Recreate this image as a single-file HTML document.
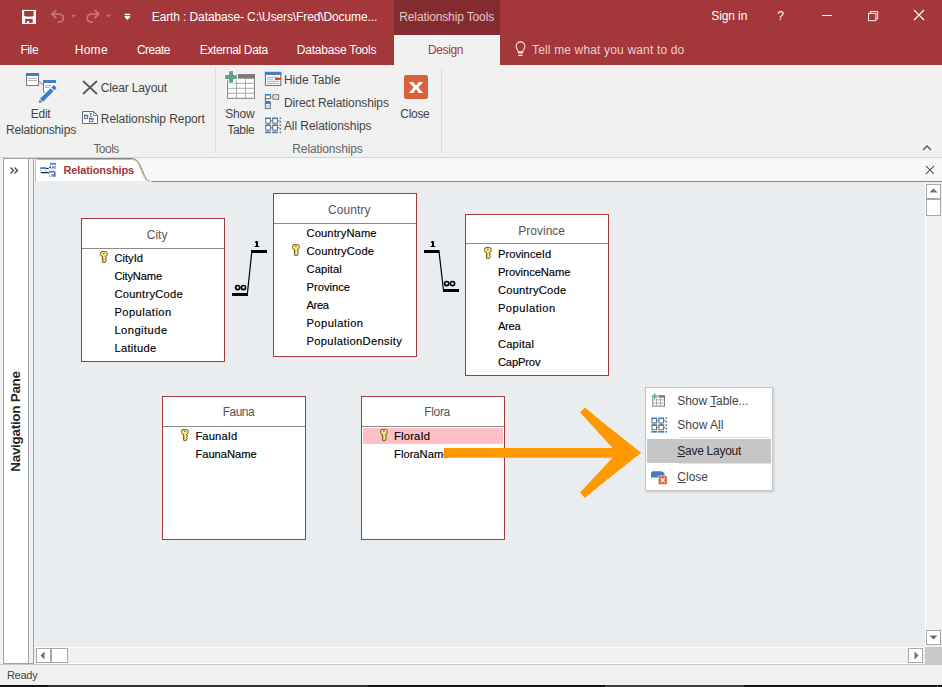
<!DOCTYPE html>
<html><head><meta charset="utf-8">
<style>
html,body{margin:0;padding:0;width:942px;height:687px;overflow:hidden;background:#F0F0F0;font-family:"Liberation Sans",sans-serif}
.a{position:absolute}
.t{position:absolute;white-space:nowrap;line-height:1;font-family:"Liberation Sans",sans-serif}
.tbl{position:absolute;background:#fff;border:1px solid #A4373A}
.div{position:absolute;height:1px;background:#8C8C8C}
.key{position:absolute}
svg{position:absolute;overflow:visible}
</style></head><body>
<!-- title bar + tab row -->
<div class="a" style="left:0;top:0;width:942px;height:65px;background:#A4373A"></div>
<div class="a" style="left:394px;top:0;width:106px;height:35px;background:#832C2F"></div>
<div class="a" style="left:394px;top:35px;width:106px;height:30px;background:#F1F1F1"></div>
<!-- ribbon -->
<div class="a" style="left:0;top:65px;width:942px;height:92px;background:#F1F1F1"></div>
<div class="a" style="left:0;top:157px;width:942px;height:1px;background:#D5D5D5"></div>
<div class="a" style="left:215px;top:69px;width:1px;height:84px;background:#DADADA"></div>
<div class="a" style="left:441px;top:69px;width:1px;height:84px;background:#DADADA"></div>

<!-- title bar icons -->
<svg style="left:0;top:0" width="140" height="35" viewBox="0 0 140 35">
  <rect x="22" y="9.9" width="14" height="14" fill="#fff"/>
  <path d="M24.2 11.1 H33.6 V15.6 L32.8 16.5 H25 L24.2 15.6 Z" fill="#A4373A"/>
  <rect x="25.1" y="18.9" width="7.6" height="4" fill="#A4373A"/>
  <rect x="26.9" y="21" width="2.3" height="1.9" fill="#fff"/>
  <g fill="none" stroke="#C77275" stroke-width="1.9">
    <path d="M52 14.1 H59.3 A4 4 0 0 1 59.3 22.1 H57.5"/>
    <path d="M56.3 9.9 L52 14.1 L56.3 18.3"/>
    <path d="M98.8 14.1 H91.2 A4 4 0 0 0 91.2 22.1 H93"/>
    <path d="M94.5 9.9 L98.8 14.1 L94.5 18.3"/>
  </g>
  <path d="M71 14.8 H76 L73.5 17.8 Z" fill="#C77275"/>
  <path d="M106 14.8 H111 L108.5 17.8 Z" fill="#C77275"/>
  <rect x="124.6" y="13.7" width="5.6" height="1.3" fill="#fff"/>
  <rect x="124.6" y="15.8" width="5.6" height="1.3" fill="#fff"/>
  <path d="M124.6 17 H130.2 L127.4 20.1 Z" fill="#fff"/>
</svg>
<!-- window controls -->
<div class="a" style="left:822px;top:15px;width:10px;height:1px;background:#fff"></div>
<svg style="left:868px;top:10.5px" width="10.2" height="10.2" viewBox="0 0 11 11">
  <rect x="0.5" y="2.5" width="8" height="8" fill="none" stroke="#fff" stroke-width="1"/>
  <path d="M2.5 2.5 V0.5 H10.5 V8.5 H8.5" fill="none" stroke="#fff" stroke-width="1"/>
</svg>
<svg style="left:914px;top:10px" width="10" height="10" viewBox="0 0 10 10">
  <path d="M0 0 L10 10 M10 0 L0 10" stroke="#fff" stroke-width="1.1"/>
</svg>
<!-- tell me bulb -->
<svg style="left:0;top:0" width="540" height="60" viewBox="0 0 540 60">
  <path d="M518.2 51.8 C518.2 49.8 516.1 49 516.1 46.3 A4.4 4.4 0 0 1 524.9 46.3 C524.9 49 522.8 49.8 522.8 51.8 Z" fill="none" stroke="#F3E0E0" stroke-width="1.1"/>
  <rect x="517.9" y="51.6" width="5.2" height="1.9" fill="#F3E0E0"/>
  <rect x="518.4" y="54.7" width="4.2" height="1.3" fill="#F3E0E0"/>
</svg>

<!-- ribbon icons -->
<!-- Edit relationships -->
<svg style="left:0;top:0" width="70" height="110" viewBox="0 0 70 110">
  <rect x="26.6" y="73.5" width="12" height="12" fill="#fff" stroke="#7A7A7A" stroke-width="1"/>
  <rect x="26" y="73" width="13" height="3" fill="#3F7EC1"/>
  <path d="M28.2 78.4 H36.9 M28.2 80.5 H36.9" stroke="#A8A8A8" stroke-width="0.9"/>
  <path d="M38.8 81 L43.2 85.2" stroke="#6A6A6A" stroke-width="0.9"/>
  <path d="M43.5 83 V92.2 H45" fill="#fff" stroke="#7A7A7A" stroke-width="1"/>
  <rect x="44" y="83" width="11.5" height="9" fill="#fff"/>
  <rect x="43" y="80" width="13" height="3" fill="#3F7EC1"/>
  <path d="M45.2 85.6 H51.8 M45.2 87.5 H49.8" stroke="#A8A8A8" stroke-width="0.9"/>
  <g transform="translate(38.8 102.9) rotate(-45)">
    <path d="M0 0 L3 -1.9 V1.9 Z" fill="#3F7EC1"/>
    <rect x="3.9" y="-2.1" width="14.8" height="4.2" fill="#3F7EC1"/>
    <rect x="19.8" y="-2.1" width="3.4" height="4.2" fill="#3F7EC1"/>
  </g>
</svg>
<!-- Clear layout X -->
<svg style="left:82px;top:80px" width="16" height="15" viewBox="0 0 16 15">
  <path d="M1 1 L15 14 M15 1 L1 14" stroke="#595959" stroke-width="1.8"/>
</svg>
<!-- relationship report -->
<svg style="left:0;top:0" width="110" height="130" viewBox="0 0 110 130">
  <path d="M82.5 111.5 H93.6 L97.5 115.4 V123.5 H82.5 Z" fill="#fff" stroke="#6A6A6A" stroke-width="1"/>
  <path d="M93.6 111.5 V115.4 H97.5" fill="none" stroke="#6A6A6A" stroke-width="0.9"/>
  <rect x="84.5" y="115.3" width="3.2" height="3.3" fill="none" stroke="#6A6A6A" stroke-width="0.9"/>
  <rect x="84" y="114.8" width="4.2" height="1.8" fill="#3F7EC1"/>
  <rect x="89.5" y="118.3" width="3.4" height="3.4" fill="none" stroke="#6A6A6A" stroke-width="0.9"/>
  <rect x="89" y="117.8" width="4.4" height="1.8" fill="#3F7EC1"/>
  <rect x="90" y="113" width="1.8" height="1.6" fill="#3F7EC1"/>
  <path d="M90.5 114.5 V116.5 H92" fill="none" stroke="#6A6A6A" stroke-width="0.8"/>
</svg>
<!-- show table -->
<svg style="left:0;top:0" width="300" height="140" viewBox="0 0 300 140">
  <rect x="227.6" y="74.7" width="26.8" height="23.6" fill="#fff" stroke="#7F7F7F" stroke-width="1"/>
  <rect x="237.6" y="74.2" width="17.3" height="4.5" fill="#7A7A7A"/>
  <path d="M228 83.3 H254 M228 88.3 H254 M228 93.3 H254 M236.5 79 V98 M245.5 79 V98" stroke="#A8A8A8" stroke-width="1"/>
  <path d="M228.6 70.6 H233.6 V74.6 H237.3 V79.6 H233.6 V83.3 H228.6 V79.6 H224.6 V74.6 H228.6 Z" fill="#5FA383" stroke="#fff" stroke-width="1"/>
  <!-- hide table -->
  <rect x="265.4" y="72.4" width="15.4" height="13" fill="#fff" stroke="#6A6A6A" stroke-width="1"/>
  <rect x="264.9" y="71.9" width="16.4" height="3" fill="#3F7EC1"/>
  <path d="M267.2 77.3 H279 M267.2 79.2 H273 M267.2 81.3 H279 M267.2 83.3 H279" stroke="#9A9A9A" stroke-width="0.8"/>
  <rect x="275" y="77.8" width="6.2" height="2.2" fill="#D04A32"/>
  <!-- direct relationships -->
  <rect x="265.4" y="94.6" width="5" height="4" fill="#fff" stroke="#6A6A6A" stroke-width="1"/>
  <rect x="264.9" y="94" width="6" height="1.6" fill="#3F7EC1"/>
  <rect x="273" y="94.8" width="5.6" height="4.4" fill="#fff" stroke="#6A6A6A" stroke-width="1"/>
  <path d="M270.5 96.8 H273 M274.5 97 H277" stroke="#8A8A8A" stroke-width="0.8"/>
  <path d="M265.4 98.6 V101.5 H270 V104.5" fill="none" stroke="#6A6A6A" stroke-width="1"/>
  <rect x="265.4" y="102.6" width="4.8" height="5.8" fill="#fff" stroke="#6A6A6A" stroke-width="1"/>
  <rect x="264.9" y="102.1" width="5.8" height="1.8" fill="#3F7EC1"/>
  <path d="M266.5 105.8 H269" stroke="#8A8A8A" stroke-width="0.8"/>
  <!-- all relationships -->
  <g fill="#fff" stroke="#6A6A6A" stroke-width="1">
    <rect x="265.8" y="118.5" width="4.6" height="4.6"/><rect x="272.8" y="118.5" width="4.6" height="4.6"/>
    <rect x="265.8" y="125.5" width="4.6" height="4.6"/><rect x="272.8" y="125.5" width="4.6" height="4.6"/>
  </g>
  <path d="M268 123.3 V125.3 M275 123.3 V125.3 M270.5 120.8 H272.6 M270.5 127.8 H272.6 M277.5 120.8 H279.5 M277.5 127.8 H279.5 M268 130.3 V131.5 M275 130.3 V131.5" stroke="#6A6A6A" stroke-width="0.9"/>
  <g fill="#3F7EC1">
    <rect x="265.3" y="117.5" width="5.6" height="1.6"/><rect x="272.3" y="117.5" width="5.6" height="1.6"/><rect x="279.5" y="117.5" width="1.6" height="1.6"/>
    <rect x="265.3" y="124.5" width="5.6" height="1.6"/><rect x="272.3" y="124.5" width="5.6" height="1.6"/><rect x="279.5" y="124.5" width="1.6" height="1.6"/>
    <rect x="265" y="131.6" width="6" height="1.6"/><rect x="272" y="131.6" width="6" height="1.6"/><rect x="279.5" y="131.6" width="1.6" height="1.6"/>
    <rect x="279.5" y="121" width="1.6" height="1.6"/><rect x="279.5" y="128" width="1.6" height="1.6"/>
  </g>
</svg>
<!-- close -->
<svg style="left:404px;top:75px" width="24" height="24" viewBox="0 0 24 24">
  <rect x="0" y="0" width="24" height="24" rx="2.5" fill="#D9603B"/>
  <path d="M4.9 6.9 H9.3 L12 10.6 L14.7 6.9 H19.1 L14.3 12.4 L19.1 18 H14.7 L12 14.2 L9.3 18 H4.9 L9.7 12.4 Z" fill="#fff"/>
</svg>
<!-- collapse caret -->
<svg style="left:922px;top:145px" width="10" height="6" viewBox="0 0 10 6">
  <path d="M1 5 L5 1 L9 5" fill="none" stroke="#555" stroke-width="1.3"/>
</svg>

<!-- nav pane -->
<div class="a" style="left:3px;top:158px;width:24px;height:504px;background:#fff;border:1px solid #9AA2AC"></div>
<div class="a" style="left:28px;top:158px;width:4px;height:504px;background:#F2F3F5;border:1px solid #9AA2AC"></div>
<svg style="left:10px;top:167px" width="8" height="7" viewBox="0 0 8 7">
  <path d="M0.5 0.5 L3.5 3.5 L0.5 6.5 M4.5 0.5 L7.5 3.5 L4.5 6.5" fill="none" stroke="#3A3F47" stroke-width="1.2"/>
</svg>
<div class="t" style="left:-34px;top:414.9px;width:100px;height:13.5px;text-align:center;font-size:13.5px;letter-spacing:-0.3px;font-weight:bold;color:#262626;transform:rotate(-90deg);transform-origin:50% 50%">Navigation Pane</div>

<!-- document tab row -->
<div class="a" style="left:34px;top:158px;width:908px;height:24px;background:#F7F7F7"></div>
<svg style="left:0;top:0" width="942" height="200" viewBox="0 0 942 200">
  <path d="M34.5 158.5 H131 C135.5 158.5 137.5 160.5 139.5 164 L144.5 175.5 C146.5 180 148 181.5 152 181.5 H942" fill="none" stroke="#80868C" stroke-width="1"/>
  <path d="M35.5 182 V161.5 Q35.5 159.5 37.5 159.5 H131 C135 159.5 136.8 161.2 138.6 164.5 L143.6 176 C145.6 180.5 147 182 151 182 Z" fill="#fff" stroke="#D8B892" stroke-width="1"/>
  <path d="M36 182 H152" stroke="#fff" stroke-width="1"/>
</svg>
<svg style="left:0;top:0" width="70" height="190" viewBox="0 0 70 190">
  <rect x="40.8" y="167.7" width="5" height="5" fill="#fff" stroke="#A9B9D0" stroke-width="0.9"/>
  <rect x="40.3" y="167.2" width="6" height="1.8" fill="#4A86E0"/>
  <rect x="50.4" y="163.4" width="5.2" height="5.4" fill="#fff" stroke="#A9B9D0" stroke-width="0.9"/>
  <rect x="49.9" y="162.9" width="6.1" height="1.8" fill="#4A86E0"/>
  <rect x="52" y="166" width="3" height="2.4" fill="#8C9BB5"/>
  <rect x="49.7" y="171.3" width="5.2" height="5.4" fill="#fff" stroke="#A9B9D0" stroke-width="0.9"/>
  <rect x="49.2" y="170.9" width="5.9" height="1.8" fill="#4A86E0"/>
  <rect x="51.2" y="174" width="2.8" height="2.4" fill="#8C9BB5"/>
  <path d="M54.8 172.4 V176.6" stroke="#1F3050" stroke-width="1"/>
  <path d="M46 168.5 H48.5 L49.5 167.3 H51" fill="none" stroke="#1F3050" stroke-width="1"/>
  <path d="M41 172.6 H48 L48.8 173.4" fill="none" stroke="#1F3050" stroke-width="1.1"/>
</svg>
<svg style="left:926px;top:166px" width="8" height="8" viewBox="0 0 8 8">
  <path d="M0 0 L8 8 M8 0 L0 8" stroke="#333" stroke-width="1.05"/>
</svg>

<!-- canvas -->
<div class="a" style="left:34px;top:182px;width:891px;height:465px;background:#E9EDF0"></div>
<!-- v scrollbar -->
<div class="a" style="left:925px;top:182px;width:17px;height:465px;background:#F0F0F0;border-left:1px solid #fff;box-sizing:border-box"></div>
<div class="a" style="left:926px;top:184px;width:13px;height:13px;background:#fff;border:1px solid #A8A8A8"></div>
<svg style="left:929px;top:188px" width="9" height="5" viewBox="0 0 9 5"><path d="M0.5 4.5 L4.5 0.5 L8.5 4.5 Z" fill="#6E6E6E"/></svg>
<div class="a" style="left:926px;top:199px;width:13px;height:15px;background:#fff;border:1px solid #A8A8A8"></div>
<div class="a" style="left:926px;top:630px;width:13px;height:13px;background:#fff;border:1px solid #A8A8A8"></div>
<svg style="left:929px;top:635px" width="9" height="5" viewBox="0 0 9 5"><path d="M0.5 0.5 L4.5 4.5 L8.5 0.5 Z" fill="#6E6E6E"/></svg>
<!-- h scrollbar -->
<div class="a" style="left:34px;top:647px;width:891px;height:17px;background:#F0F0F0;border-top:1px solid #fff;border-bottom:1px solid #fff;box-sizing:border-box"></div>
<div class="a" style="left:36px;top:648px;width:13px;height:13px;background:#fff;border:1px solid #A8A8A8"></div>
<svg style="left:40px;top:651px" width="5" height="9" viewBox="0 0 5 9"><path d="M4.5 0.5 L0.5 4.5 L4.5 8.5 Z" fill="#6E6E6E"/></svg>
<div class="a" style="left:51px;top:648px;width:15px;height:13px;background:#fff;border:1px solid #A8A8A8"></div>
<div class="a" style="left:908px;top:648px;width:13px;height:13px;background:#fff;border:1px solid #A8A8A8"></div>
<svg style="left:913.7px;top:651px" width="5" height="9" viewBox="0 0 5 9"><path d="M0.5 0.5 L4.5 4.5 L0.5 8.5 Z" fill="#6E6E6E"/></svg>
<div class="a" style="left:925px;top:647px;width:17px;height:17px;background:#C8C9CC"></div>
<div class="a" style="left:0;top:664px;width:942px;height:1px;background:#C5C5C5"></div>
<!-- status bar -->
<div class="a" style="left:0;top:665px;width:942px;height:20px;background:#F0F0F0"></div>
<div class="a" style="left:0;top:685px;width:942px;height:2px;background:#141414"></div>
<div class="a" style="left:48px;top:685px;width:320px;height:2px;background:#2E2E2E"></div>
<div class="a" style="left:605px;top:685px;width:139px;height:2px;background:#404040"></div>
<div class="a" style="left:937px;top:685px;width:1px;height:2px;background:#6A6A6A"></div>

<!-- tables -->
<div class="tbl" style="left:81px;top:218px;width:142px;height:142px"></div>
<div class="div" style="left:82px;top:248px;width:142px"></div>
<svg class="key" style="left:99.8px;top:251.0px" width="8" height="12" viewBox="0 0 8 12"><path d="M2 0.6 H5.6 Q7.2 0.6 7.2 2.2 V3.6 Q7.2 5.2 5.6 5.2 V6.4 L6.6 7.1 L5.6 7.8 V8.6 L6.6 9.3 L5.6 10 V11 Q5.6 11.4 5 11.4 H3 Q2.4 11.4 2.4 10.8 V5.2 Q0.6 5.2 0.6 3.6 V2.2 Q0.6 0.6 2 0.6 Z" fill="#F3EC8A" stroke="#6E4F0C" stroke-width="0.95"/><circle cx="3.9" cy="2.5" r="0.75" fill="#7A4A1A"/><path d="M3.6 6 V10.4" stroke="#D9B838" stroke-width="0.9"/></svg>
<div class="tbl" style="left:273px;top:193px;width:142px;height:162px"></div>
<div class="div" style="left:274px;top:223px;width:142px"></div>
<svg class="key" style="left:291.8px;top:244.3px" width="8" height="12" viewBox="0 0 8 12"><path d="M2 0.6 H5.6 Q7.2 0.6 7.2 2.2 V3.6 Q7.2 5.2 5.6 5.2 V6.4 L6.6 7.1 L5.6 7.8 V8.6 L6.6 9.3 L5.6 10 V11 Q5.6 11.4 5 11.4 H3 Q2.4 11.4 2.4 10.8 V5.2 Q0.6 5.2 0.6 3.6 V2.2 Q0.6 0.6 2 0.6 Z" fill="#F3EC8A" stroke="#6E4F0C" stroke-width="0.95"/><circle cx="3.9" cy="2.5" r="0.75" fill="#7A4A1A"/><path d="M3.6 6 V10.4" stroke="#D9B838" stroke-width="0.9"/></svg>
<div class="tbl" style="left:465px;top:214px;width:142px;height:160px"></div>
<div class="div" style="left:466px;top:243px;width:142px"></div>
<svg class="key" style="left:483.8px;top:247.2px" width="8" height="12" viewBox="0 0 8 12"><path d="M2 0.6 H5.6 Q7.2 0.6 7.2 2.2 V3.6 Q7.2 5.2 5.6 5.2 V6.4 L6.6 7.1 L5.6 7.8 V8.6 L6.6 9.3 L5.6 10 V11 Q5.6 11.4 5 11.4 H3 Q2.4 11.4 2.4 10.8 V5.2 Q0.6 5.2 0.6 3.6 V2.2 Q0.6 0.6 2 0.6 Z" fill="#F3EC8A" stroke="#6E4F0C" stroke-width="0.95"/><circle cx="3.9" cy="2.5" r="0.75" fill="#7A4A1A"/><path d="M3.6 6 V10.4" stroke="#D9B838" stroke-width="0.9"/></svg>
<div class="tbl" style="left:162px;top:396px;width:142px;height:142px"></div>
<div class="div" style="left:163px;top:426px;width:142px"></div>
<svg class="key" style="left:180.8px;top:429.3px" width="8" height="12" viewBox="0 0 8 12"><path d="M2 0.6 H5.6 Q7.2 0.6 7.2 2.2 V3.6 Q7.2 5.2 5.6 5.2 V6.4 L6.6 7.1 L5.6 7.8 V8.6 L6.6 9.3 L5.6 10 V11 Q5.6 11.4 5 11.4 H3 Q2.4 11.4 2.4 10.8 V5.2 Q0.6 5.2 0.6 3.6 V2.2 Q0.6 0.6 2 0.6 Z" fill="#F3EC8A" stroke="#6E4F0C" stroke-width="0.95"/><circle cx="3.9" cy="2.5" r="0.75" fill="#7A4A1A"/><path d="M3.6 6 V10.4" stroke="#D9B838" stroke-width="0.9"/></svg>
<div class="tbl" style="left:361px;top:396px;width:142px;height:142px"></div>
<div class="div" style="left:362px;top:426px;width:142px"></div>
<div style="position:absolute;left:363px;top:428px;width:140px;height:16px;background:#FFC0C5"></div>
<svg class="key" style="left:379.8px;top:429.3px" width="8" height="12" viewBox="0 0 8 12"><path d="M2 0.6 H5.6 Q7.2 0.6 7.2 2.2 V3.6 Q7.2 5.2 5.6 5.2 V6.4 L6.6 7.1 L5.6 7.8 V8.6 L6.6 9.3 L5.6 10 V11 Q5.6 11.4 5 11.4 H3 Q2.4 11.4 2.4 10.8 V5.2 Q0.6 5.2 0.6 3.6 V2.2 Q0.6 0.6 2 0.6 Z" fill="#F3EC8A" stroke="#6E4F0C" stroke-width="0.95"/><circle cx="3.9" cy="2.5" r="0.75" fill="#7A4A1A"/><path d="M3.6 6 V10.4" stroke="#D9B838" stroke-width="0.9"/></svg>

<!-- relationship lines -->
<svg style="left:0;top:0" width="942" height="687" viewBox="0 0 942 687">
  <g fill="#000">
    <rect x="251" y="250" width="16" height="3"/>
    <rect x="232" y="293" width="16" height="3"/>
    <rect x="424" y="250" width="15.5" height="3"/>
    <rect x="443" y="289" width="16" height="3"/>
  </g>
  <path d="M251.8 251.5 L247.3 294.5" stroke="#000" stroke-width="1.2"/>
  <path d="M439 251.5 L443.5 290.5" stroke="#000" stroke-width="1.2"/>
  <g fill="#000">
    <path d="M256 241 H257.9 V245.9 H259.2 V247 H254.7 V245.9 H256 V242.6 L254.9 243.2 V242.1 Z"/>
    <path d="M432 241 H433.9 V245.9 H435.2 V247 H430.7 V245.9 H432 V242.6 L430.9 243.2 V242.1 Z"/>
  </g>
  <g fill="none" stroke="#000" stroke-width="1.7">
    <circle cx="237.7" cy="287.6" r="2.1"/><circle cx="243.5" cy="287.6" r="2.1"/>
    <circle cx="446.7" cy="283.6" r="2.1"/><circle cx="452.5" cy="283.6" r="2.1"/>
  </g>
</svg>

<!-- texts -->
<div class="t" style="left:151.8px;top:10.8px;font-size:12px;font-weight:400;color:#ffffff;letter-spacing:-0.116px;">Earth : Database- C:\Users\Fred\Docume...</div>
<div class="t" style="left:399.3px;top:10.8px;font-size:12px;font-weight:400;color:#E8C4C5;letter-spacing:-0.136px;">Relationship Tools</div>
<div class="t" style="left:711.3px;top:9.8px;font-size:12px;font-weight:400;color:#ffffff;letter-spacing:-0.109px;">Sign in</div>
<div class="t" style="left:777.3px;top:9.8px;font-size:12px;font-weight:400;color:#ffffff;letter-spacing:0.000px;">?</div>
<div class="t" style="left:20.4px;top:43.8px;font-size:12px;font-weight:400;color:#ffffff;letter-spacing:-0.385px;">File</div>
<div class="t" style="left:74.7px;top:43.8px;font-size:12px;font-weight:400;color:#ffffff;letter-spacing:0.288px;">Home</div>
<div class="t" style="left:136.9px;top:43.8px;font-size:12px;font-weight:400;color:#ffffff;letter-spacing:-0.478px;">Create</div>
<div class="t" style="left:199.8px;top:43.8px;font-size:12px;font-weight:400;color:#ffffff;letter-spacing:-0.368px;">External Data</div>
<div class="t" style="left:296.8px;top:43.8px;font-size:12px;font-weight:400;color:#ffffff;letter-spacing:-0.213px;">Database Tools</div>
<div class="t" style="left:427.9px;top:43.8px;font-size:12px;font-weight:400;color:#A4373A;letter-spacing:-0.360px;">Design</div>
<div class="t" style="left:532.0px;top:43.8px;font-size:12px;font-weight:400;color:#E9CFD0;letter-spacing:0.159px;">Tell me what you want to do</div>
<div class="t" style="left:30.8px;top:107.8px;font-size:12px;font-weight:400;color:#444;letter-spacing:-0.292px;">Edit</div>
<div class="t" style="left:5.9px;top:123.8px;font-size:12px;font-weight:400;color:#444;letter-spacing:-0.147px;">Relationships</div>
<div class="t" style="left:100.8px;top:81.8px;font-size:12px;font-weight:400;color:#444;letter-spacing:-0.166px;">Clear Layout</div>
<div class="t" style="left:100.8px;top:112.8px;font-size:12px;font-weight:400;color:#444;letter-spacing:-0.074px;">Relationship Report</div>
<div class="t" style="left:93.4px;top:143.4px;font-size:12px;font-weight:400;color:#666;letter-spacing:-0.524px;">Tools</div>
<div class="t" style="left:225.3px;top:107.8px;font-size:12px;font-weight:400;color:#444;letter-spacing:-0.194px;">Show</div>
<div class="t" style="left:227.3px;top:123.8px;font-size:12px;font-weight:400;color:#444;letter-spacing:-0.314px;">Table</div>
<div class="t" style="left:283.9px;top:73.8px;font-size:12px;font-weight:400;color:#444;letter-spacing:0.007px;">Hide Table</div>
<div class="t" style="left:283.9px;top:97.2px;font-size:12px;font-weight:400;color:#444;letter-spacing:-0.090px;">Direct Relationships</div>
<div class="t" style="left:283.9px;top:120.3px;font-size:12px;font-weight:400;color:#444;letter-spacing:-0.062px;">All Relationships</div>
<div class="t" style="left:400.3px;top:107.8px;font-size:12px;font-weight:400;color:#444;letter-spacing:-0.307px;">Close</div>
<div class="t" style="left:292.3px;top:142.8px;font-size:12px;font-weight:400;color:#666;letter-spacing:-0.122px;">Relationships</div>
<div class="t" style="left:63.5px;top:164.7px;font-size:11px;font-weight:700;color:#A4373A;letter-spacing:-0.120px;">Relationships</div>
<div class="t" style="left:6.9px;top:670.1px;font-size:11px;font-weight:400;color:#444;letter-spacing:-0.255px;">Ready</div>
<div class="t" style="left:146.7px;top:228.8px;font-size:12px;font-weight:400;color:#555;letter-spacing:0.046px;">City</div>
<div class="t" style="left:114.4px;top:253.0px;font-size:11.2px;font-weight:400;color:#000;letter-spacing:0.004px;-webkit-text-stroke:0.15px #000;">CityId</div>
<div class="t" style="left:114.4px;top:271.0px;font-size:11.2px;font-weight:400;color:#000;letter-spacing:-0.196px;-webkit-text-stroke:0.15px #000;">CityName</div>
<div class="t" style="left:114.4px;top:289.0px;font-size:11.2px;font-weight:400;color:#000;letter-spacing:0.237px;-webkit-text-stroke:0.15px #000;">CountryCode</div>
<div class="t" style="left:114.4px;top:307.0px;font-size:11.2px;font-weight:400;color:#000;letter-spacing:0.435px;-webkit-text-stroke:0.15px #000;">Population</div>
<div class="t" style="left:114.4px;top:325.0px;font-size:11.2px;font-weight:400;color:#000;letter-spacing:0.448px;-webkit-text-stroke:0.15px #000;">Longitude</div>
<div class="t" style="left:114.4px;top:343.0px;font-size:11.2px;font-weight:400;color:#000;letter-spacing:0.284px;-webkit-text-stroke:0.15px #000;">Latitude</div>
<div class="t" style="left:328.0px;top:203.8px;font-size:12px;font-weight:400;color:#555;letter-spacing:0.067px;">Country</div>
<div class="t" style="left:306.5px;top:228.3px;font-size:11.2px;font-weight:400;color:#000;letter-spacing:0.102px;-webkit-text-stroke:0.15px #000;">CountryName</div>
<div class="t" style="left:306.5px;top:246.3px;font-size:11.2px;font-weight:400;color:#000;letter-spacing:0.167px;-webkit-text-stroke:0.15px #000;">CountryCode</div>
<div class="t" style="left:306.5px;top:264.3px;font-size:11.2px;font-weight:400;color:#000;letter-spacing:0.082px;-webkit-text-stroke:0.15px #000;">Capital</div>
<div class="t" style="left:306.5px;top:282.3px;font-size:11.2px;font-weight:400;color:#000;letter-spacing:0.000px;-webkit-text-stroke:0.15px #000;">Province</div>
<div class="t" style="left:306.5px;top:300.3px;font-size:11.2px;font-weight:400;color:#000;letter-spacing:-0.395px;-webkit-text-stroke:0.15px #000;">Area</div>
<div class="t" style="left:306.5px;top:318.3px;font-size:11.2px;font-weight:400;color:#000;letter-spacing:0.413px;-webkit-text-stroke:0.15px #000;">Population</div>
<div class="t" style="left:306.5px;top:336.3px;font-size:11.2px;font-weight:400;color:#000;letter-spacing:0.323px;-webkit-text-stroke:0.15px #000;">PopulationDensity</div>
<div class="t" style="left:518.3px;top:224.8px;font-size:12px;font-weight:400;color:#555;letter-spacing:0.002px;">Province</div>
<div class="t" style="left:497.9px;top:249.2px;font-size:11.2px;font-weight:400;color:#000;letter-spacing:0.048px;-webkit-text-stroke:0.15px #000;">ProvinceId</div>
<div class="t" style="left:497.9px;top:267.2px;font-size:11.2px;font-weight:400;color:#000;letter-spacing:-0.079px;-webkit-text-stroke:0.15px #000;">ProvinceName</div>
<div class="t" style="left:497.9px;top:285.2px;font-size:11.2px;font-weight:400;color:#000;letter-spacing:0.237px;-webkit-text-stroke:0.15px #000;">CountryCode</div>
<div class="t" style="left:497.9px;top:303.2px;font-size:11.2px;font-weight:400;color:#000;letter-spacing:0.502px;-webkit-text-stroke:0.15px #000;">Population</div>
<div class="t" style="left:497.9px;top:321.2px;font-size:11.2px;font-weight:400;color:#000;letter-spacing:-0.295px;-webkit-text-stroke:0.15px #000;">Area</div>
<div class="t" style="left:497.9px;top:339.2px;font-size:11.2px;font-weight:400;color:#000;letter-spacing:0.216px;-webkit-text-stroke:0.15px #000;">Capital</div>
<div class="t" style="left:497.9px;top:357.2px;font-size:11.2px;font-weight:400;color:#000;letter-spacing:-0.146px;-webkit-text-stroke:0.15px #000;">CapProv</div>
<div class="t" style="left:222.7px;top:406.2px;font-size:12px;font-weight:400;color:#555;letter-spacing:-0.505px;">Fauna</div>
<div class="t" style="left:195.4px;top:431.3px;font-size:11.2px;font-weight:400;color:#000;letter-spacing:0.126px;-webkit-text-stroke:0.15px #000;">FaunaId</div>
<div class="t" style="left:195.4px;top:449.3px;font-size:11.2px;font-weight:400;color:#000;letter-spacing:-0.019px;-webkit-text-stroke:0.15px #000;">FaunaName</div>
<div class="t" style="left:424.3px;top:406.2px;font-size:12px;font-weight:400;color:#555;letter-spacing:-0.358px;">Flora</div>
<div class="t" style="left:394.1px;top:431.3px;font-size:11.2px;font-weight:400;color:#000;letter-spacing:0.166px;-webkit-text-stroke:0.15px #000;">FloraId</div>
<div class="t" style="left:394.1px;top:449.3px;font-size:11.2px;font-weight:400;color:#000;letter-spacing:0.000px;-webkit-text-stroke:0.15px #000;">FloraName</div>

<!-- context menu -->
<div class="a" style="left:645px;top:387px;width:126px;height:102px;background:#fff;border:1px solid #C6C6C6;box-shadow:1px 1px 2px rgba(0,0,0,0.15)"></div>
<div class="a" style="left:679px;top:437px;width:92px;height:1px;background:#E2E2E2"></div>
<div class="a" style="left:647px;top:439px;width:124px;height:24px;background:#C6C6C6"></div>
<div class="a" style="left:679px;top:463px;width:92px;height:1px;background:#E2E2E2"></div>
<div class="t" style="left:677.3px;top:394.8px;font-size:12px;font-weight:400;color:#444;letter-spacing:-0.064px;">Show <u>T</u>able...</div>
<div class="t" style="left:677.3px;top:418.8px;font-size:12px;font-weight:400;color:#444;letter-spacing:0.000px;">Show A<u>l</u>l</div>
<div class="t" style="left:677.3px;top:444.8px;font-size:12px;font-weight:400;color:#222;letter-spacing:-0.273px;"><u>S</u>ave Layout</div>
<div class="t" style="left:677.3px;top:470.8px;font-size:12px;font-weight:400;color:#444;letter-spacing:0.000px;"><u>C</u>lose</div>
<svg style="left:0;top:0" width="700" height="420" viewBox="0 0 700 420">
  <rect x="652.7" y="395.9" width="11.8" height="10.2" fill="#fff" stroke="#7F7F7F" stroke-width="1"/>
  <rect x="658.8" y="395.4" width="6.2" height="2.3" fill="#7A7A7A"/>
  <path d="M653 399.8 H664.2 M653 403 H664.2 M656.5 398 V406 M660.5 398 V406" stroke="#A8A8A8" stroke-width="0.9"/>
  <path d="M653.4 393.2 H655.6 V395.3 H657.6 V397.5 H655.6 V399.4 H653.4 V397.5 H651.3 V395.3 H653.4 Z" fill="#5FA383" stroke="#fff" stroke-width="0.6"/>
</svg>
<svg style="left:0;top:0" width="700" height="440" viewBox="0 0 700 440">
  <g fill="#fff" stroke="#6A6A6A" stroke-width="1">
    <rect x="652" y="418.5" width="4.6" height="4.4"/><rect x="659" y="418.5" width="4.6" height="4.4"/>
    <rect x="652" y="425.3" width="4.6" height="4.4"/><rect x="659" y="425.3" width="4.6" height="4.4"/>
  </g>
  <path d="M654.3 423 V425 M661.3 423 V425 M656.7 420.7 H658.9 M656.7 427.5 H658.9 M663.7 420.7 H665.5 M663.7 427.5 H665.5" stroke="#6A6A6A" stroke-width="0.9"/>
  <g fill="#3F7EC1">
    <rect x="651.5" y="417.5" width="5.6" height="1.6"/><rect x="658.5" y="417.5" width="5.6" height="1.6"/><rect x="665.5" y="417.5" width="1.6" height="1.6"/>
    <rect x="651.5" y="424.3" width="5.6" height="1.6"/><rect x="658.5" y="424.3" width="5.6" height="1.6"/><rect x="665.5" y="424.3" width="1.6" height="1.6"/>
    <rect x="651.2" y="431" width="6" height="1.6"/><rect x="658.2" y="431" width="6" height="1.6"/><rect x="665.5" y="431" width="1.6" height="1.6"/>
    <rect x="665.5" y="421" width="1.6" height="1.6"/><rect x="665.5" y="427.8" width="1.6" height="1.6"/>
  </g>
</svg>
<svg style="left:0;top:0" width="700" height="490" viewBox="0 0 700 490">
  <path d="M651 473.2 Q651 471.3 653 471.3 H661 Q663.6 471.3 664.6 474 V477.4 H651 Z" fill="#3F7EC1"/>
  <rect x="658.3" y="475.8" width="8.9" height="8.7" rx="1.3" fill="#D9603B" stroke="#fff" stroke-width="0.6"/>
  <path d="M660.7 478 L664.8 482.3 M664.8 478 L660.7 482.3" stroke="#fff" stroke-width="1.2"/>
</svg>

<!-- orange arrow -->
<svg style="left:0;top:0" width="942" height="687" viewBox="0 0 942 687">
  <path d="M444 448 H612.5 L580 412.2 L584.8 407.6 L606 425 L641.2 452.8 L606 480.5 L584.8 497.9 L580 492.5 L612.5 457.8 H444 Z" fill="#FF9900"/>
</svg>
</body></html>
